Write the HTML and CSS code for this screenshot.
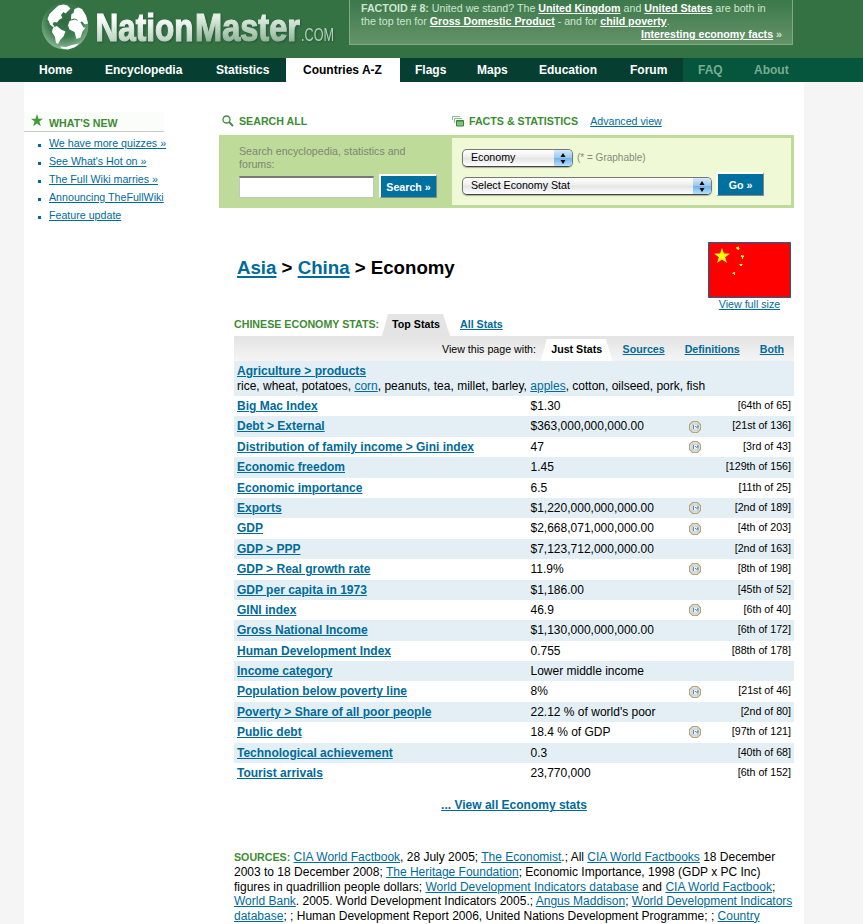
FILE: index.html
```
<!DOCTYPE html>
<html lang="en">
<head>
<meta charset="utf-8">
<title>NationMaster - Chinese Economy statistics</title>
<link rel="stylesheet" href="styles.css">
</head>
<body>
<svg class="defs" width="0" height="0" aria-hidden="true">
  <symbol id="graph" viewBox="0 0 12 12">
    <path d="M3.600.6h4.800l3 3v4.800l-3 3H3.600l-3-3V3.600z" fill="#f4efe0" stroke="#b3a57f" stroke-width="1.200"/>
    <path d="M3 3h6v6H3z" fill="#e8f2fa" stroke="#a5bdd3" stroke-width=".8"/>
    <path d="M4.500 4v4M6 5l1.500 1.500L9 4.500V7.500" fill="none" stroke="#58799b" stroke-width=".9"/>
  </symbol>
</svg>
<header class="header">
  <div class="logo">
    <svg class="globe" viewBox="0 0 50 50" width="50" height="50">
      <defs><radialGradient id="sea" cx=".5" cy=".35" r=".65"><stop offset="0" stop-color="#2c6b40"/><stop offset=".6" stop-color="#3f7d50"/><stop offset="1" stop-color="#8db997"/></radialGradient></defs>
      <circle cx="25" cy="25.200" r="23.300" fill="url(#sea)"/>
      <g fill="#fff">
        <path d="M7.500 18l2-5 4-4 5-4.500 5-1 4 1 3 3-2 2-3 3-2-1.500-2.500 3 1.500 3-3 1.500-2.500 3-3-.5-1.500 2 2 2.500-1.500.5-3-2.500-1-3z"/>
        <path d="M13 26.500l4-1.500 4 3.500 4.500 2-2 5-3 3-2.500 4.500-2-1-1-6-3-5z"/>
        <path d="M29.500 20l5-1.500 5.500 2 3.500 6h2l-3 4-2 6-4 1.500-2-7-5-2.500-1.500-4z"/>
        <path d="M31 16l.5-3 2-1 1-4 4-1.500 3.500 1.500 4 6.500 2 8-3 1-3-3-3 1-2-3-3-1-3 1z"/>
        <path d="M20 45.500l6 .5 6-2 7-1.500-4 3.500-7 2.500-6-1z"/>
      </g>
    </svg>
    <svg class="wordmark" width="246" height="50" viewBox="0 0 246 50">
      <defs><linearGradient id="wa" x1="0" x2="0" y1="0" y2="1"><stop offset=".25" stop-color="#fff"/><stop offset=".85" stop-color="#b9d2be"/></linearGradient><linearGradient id="wb" x1="0" x2="0" y1="0" y2="1"><stop offset=".25" stop-color="#e3efe5"/><stop offset=".85" stop-color="#8fb397"/></linearGradient></defs>
      <text class="word" x="1.500" y="40.500" textLength="98" lengthAdjust="spacingAndGlyphs" fill="url(#wa)" stroke="url(#wa)">Nation</text>
      <text class="word" x="101" y="40.500" textLength="105" lengthAdjust="spacingAndGlyphs" fill="url(#wb)" stroke="url(#wb)">Master</text>
      <text class="com" x="207" y="40.500" textLength="33" lengthAdjust="spacingAndGlyphs">.COM</text>
    </svg>
  </div>
  <div class="factoid"><b>FACTOID # 8:</b> United we stand? The <a>United Kingdom</a> and <a>United States</a> are both in<br>the top ten for <a>Gross Domestic Product</a> - and for <a>child poverty</a>.<div class="more"><a>Interesting economy facts</a> <b>»</b></div></div>
</header>
<nav class="nav"><a>Home</a><a>Encyclopedia</a><a>Statistics</a><a class="active">Countries A-Z</a><a>Flags</a><a>Maps</a><a>Education</a><a>Forum</a><a class="dim">FAQ</a><a class="dim">About</a></nav>
<div class="page">
  <aside class="side">
    <h3><svg width="14" height="13" viewBox="0 0 14 13"><path d="M7 0l1.500 4.700H13L9.400 7.500l1.400 4.800L7 9.400l-3.800 2.900 1.400-4.800L1 4.700h4.500z" fill="#3f9c3a"/></svg>WHAT'S NEW</h3>
    <ul>
      <li><a>We have more quizzes »</a></li><li><a>See What's Hot on »</a></li><li><a>The Full Wiki marries »</a></li><li><a>Announcing TheFullWiki</a></li><li><a>Feature update</a></li>
    </ul>
  </aside>
  <main class="main">
    <div class="search-heads">
      <h3 class="h-search"><svg width="12" height="12" viewBox="0 0 12 12"><circle cx="4.500" cy="4.500" r="3.500" fill="#f4fbf2" stroke="#3d8c43" stroke-width="1.300"/><path d="M7 7l4 4" stroke="#3d8c43" stroke-width="1.800"/></svg>SEARCH ALL</h3>
      <h3 class="h-facts"><svg width="12" height="11" viewBox="0 0 12 11"><path d="M.5 4V.5H8M2.500 7V2.500H10" fill="none" stroke="#8dba8c"/><path d="M4.500 4.500h7v5.500h-7z" fill="#7fc47b" stroke="#35853a"/><path d="M5 5h6" stroke="#35853a"/></svg>FACTS &amp; STATISTICS</h3>
      <a class="adv">Advanced view</a>
    </div>
    <div class="search-box">
      <div class="all">
        <p>Search encyclopedia, statistics and<br>forums:</p>
        <div class="line"><input type="text" aria-label="Search"><button class="btn search">Search »</button></div>
      </div>
      <div class="facts">
        <div class="line"><div class="select short"><span>Economy</span><i><svg width="6" height="11" viewBox="0 0 6 11"><path d="M3 0l2.500 4h-5zM3 11L.5 7h5z"/></svg></i></div><span class="graphable">(* = Graphable)</span></div>
        <div class="line second"><div class="select long"><span>Select Economy Stat</span><i><svg width="6" height="11" viewBox="0 0 6 11"><path d="M3 0l2.500 4h-5zM3 11L.5 7h5z"/></svg></i></div><button class="btn go">Go »</button></div>
      </div>
    </div>
    <div class="title">
      <h1><a>Asia</a> &gt; <a>China</a> &gt; Economy</h1>
      <div class="flag">
        <svg width="83" height="56" viewBox="0 0 83 56"><path d="M.5.5h82v55H.5z" fill="#f00" stroke="#006b9b"/><g fill="#ff0"><path d="M14 6l1.900 5.600H22l-4.900 3.600 1.900 5.800-5-3.500L9 21l1.900-5.800L6 11.600h6.100z"/><path d="M28.500 5h1.500l1-1v2l1 1h-1v1h-1l-2-2zM33 13h1l1 1 1-1v2h-1v2h-1v-2h-1zM31 22h4l-1 1v1h-2v-1zM24.500 31l1.500-1h1v3h-1v-1h-1.500z"/></g></svg>
        <a>View full size</a>
      </div>
    </div>
    <div class="tabs"><b class="label">CHINESE ECONOMY STATS:</b><span class="tab">Top Stats</span><a>All Stats</a></div>
    <div class="views"><span class="with">View this page with:</span><span class="tab">Just Stats</span><a>Sources</a><a>Definitions</a><a>Both</a></div>
    <div class="stats">
      <div class="row first"><a class="name">Agriculture &gt; products</a><span>rice, wheat, potatoes, <a>corn</a>, peanuts, tea, millet, barley, <a>apples</a>, cotton, oilseed, pork, fish</span></div>
      <div class="row"><a class="name">Big Mac Index</a><span>$1.30</span><em></em><small>[64th of 65]</small></div>
      <div class="row"><a class="name">Debt &gt; External</a><span>$363,000,000,000.00</span><em><svg><use href="#graph"/></svg></em><small>[21st of 136]</small></div>
      <div class="row"><a class="name">Distribution of family income &gt; Gini index</a><span>47</span><em><svg><use href="#graph"/></svg></em><small>[3rd of 43]</small></div>
      <div class="row"><a class="name">Economic freedom</a><span>1.45</span><em></em><small>[129th of 156]</small></div>
      <div class="row"><a class="name">Economic importance</a><span>6.5</span><em></em><small>[11th of 25]</small></div>
      <div class="row"><a class="name">Exports</a><span>$1,220,000,000,000.00</span><em><svg><use href="#graph"/></svg></em><small>[2nd of 189]</small></div>
      <div class="row"><a class="name">GDP</a><span>$2,668,071,000,000.00</span><em><svg><use href="#graph"/></svg></em><small>[4th of 203]</small></div>
      <div class="row"><a class="name">GDP &gt; PPP</a><span>$7,123,712,000,000.00</span><em></em><small>[2nd of 163]</small></div>
      <div class="row"><a class="name">GDP &gt; Real growth rate</a><span>11.9%</span><em><svg><use href="#graph"/></svg></em><small>[8th of 198]</small></div>
      <div class="row"><a class="name">GDP per capita in 1973</a><span>$1,186.00</span><em></em><small>[45th of 52]</small></div>
      <div class="row"><a class="name">GINI index</a><span>46.9</span><em><svg><use href="#graph"/></svg></em><small>[6th of 40]</small></div>
      <div class="row"><a class="name">Gross National Income</a><span>$1,130,000,000,000.00</span><em></em><small>[6th of 172]</small></div>
      <div class="row"><a class="name">Human Development Index</a><span>0.755</span><em></em><small>[88th of 178]</small></div>
      <div class="row"><a class="name">Income category</a><span>Lower middle income</span><em></em><small></small></div>
      <div class="row"><a class="name">Population below poverty line</a><span>8%</span><em><svg><use href="#graph"/></svg></em><small>[21st of 46]</small></div>
      <div class="row"><a class="name">Poverty &gt; Share of all poor people</a><span>22.12 % of world's poor</span><em></em><small>[2nd of 80]</small></div>
      <div class="row"><a class="name">Public debt</a><span>18.4 % of GDP</span><em><svg><use href="#graph"/></svg></em><small>[97th of 121]</small></div>
      <div class="row"><a class="name">Technological achievement</a><span>0.3</span><em></em><small>[40th of 68]</small></div>
      <div class="row"><a class="name">Tourist arrivals</a><span>23,770,000</span><em></em><small>[6th of 152]</small></div>
    </div>
    <div class="all-link"><a>... View all Economy stats</a></div>
    <p class="sources"><b>SOURCES:</b> <a>CIA World Factbook</a>, 28 July 2005; <a>The Economist</a>.; All <a>CIA World Factbooks</a> 18 December<br>2003 to 18 December 2008; <a>The Heritage Foundation</a>; Economic Importance, 1998 (GDP x PC Inc)<br>figures in quadrillion people dollars; <a>World Development Indicators database</a> and <a>CIA World Factbook</a>;<br><a>World Bank</a>. 2005. World Development Indicators 2005.; <a>Angus Maddison</a>; <a>World Development Indicators</a><br><a>database</a>; ; Human Development Report 2006, United Nations Development Programme; ; <a>Country</a></p>
  </main>
</div>
</body>
</html>
```
FILE: styles.css
```
* { box-sizing: border-box; }
html, body { margin: 0; height: 924px; overflow: hidden; }
body { background: #f5f5f5; font: 12px/14px "Liberation Sans", Arial, sans-serif; color: #000; white-space: nowrap; }
.defs { position: absolute; }
h1, h3, p, ul { margin: 0; padding: 0; }
svg { display: block; flex: none; }
a { color: #006b9b; text-decoration: underline; text-underline-offset: 1px; text-decoration-thickness: 1px; }
h3 { font-size: 10.660px; line-height: 18px; color: #3d8c33; display: flex; align-items: center; }

.header { height: 58px; background: #347243; display: flex; justify-content: space-between; padding: 0 70px 0 40px; }
.logo { display: flex; }
.globe { margin-top: 1px; }
.wordmark { margin: 0 -10px 0 4px; font-family: "Liberation Sans", Arial, sans-serif; filter: drop-shadow(1px 1px 1px #245635); }
.word { font-size: 38px; font-weight: bold; stroke-width: 1.200px; }
.com { font-size: 19px; fill: #b4d0b9; }
.factoid { width: 444px; height: 45px; padding: 2px 10px 0 11px; border: 1px solid #7fab83; border-top: 0; background: linear-gradient(#3b784a, #659468); font-size: 10.660px; line-height: 13px; color: #cde5d0; }
.factoid a { color: #fff; font-weight: bold; }
.more { text-align: right; }

.nav { height: 24px; display: grid; grid-template-columns: 66px 111px 70px 114px 77px 62px 91px 68px 56px 100px; padding-left: 39px; background: linear-gradient(90deg, #063f32 683px, #06563d 683px); }
.nav a { color: #fff; font-weight: bold; line-height: 24px; text-decoration: none; }
.nav a.active { background: #fff; color: #000; padding-left: 17px; }
.nav a.active + a { padding-left: 15px; }
.nav a.dim { color: #79ac91; }

.page { width: 780px; height: 842px; margin-left: 24px; background: #fff; display: flex; }
.side { width: 195px; padding-top: 30px; }
.side h3 { width: 140px; height: 20px; padding: 2px 0 0 6px; border-bottom: 1px solid #c9c9c9; background: #fbfdfa; }
.side h3 svg { margin: -5px 5px 0 0; }
.side ul { list-style: none; padding-top: 2px; font-size: 10.660px; line-height: 18px; }
.side li { display: flex; padding-left: 14px; }
.side li::before { content: ""; width: 3px; height: 3px; background: #006b9b; margin: 10px 8px 0 0; }
.main { width: 575px; }

.search-heads { height: 53px; padding: 30px 0 0 3px; display: flex; align-items: flex-start; font-size: 10.660px; line-height: 18px; }
.h-search svg { margin-right: 5px; }
.h-search { width: 230px; }
.h-facts svg { margin-right: 5px; }
.adv { margin-left: 12px; }
.search-box { height: 73px; background: #bfdb99; display: flex; padding: 3px 3px 3px 20px; }
.all { width: 213px; padding-top: 7px; color: #7c8773; font-size: 10.660px; line-height: 13px; }
.line { display: flex; }
.all .line { padding-top: 3px; }
input { width: 135px; height: 22px; margin: 2px 5px 0 0; border: 1px solid #c4c4c4; border-top: 2px solid #777; background: #fff; }
.btn { padding: 0; height: 24px; border: solid; border-width: 2px 1px 1px 2px; border-color: #fff #888 #888 #fff; background: #00709f; color: #fff; font: bold 10.660px/18px "Liberation Sans", Arial, sans-serif; }
.search { width: 58px; }
.go { width: 48px; margin: -5px 0 0 4px; }
.facts { width: 339px; background: #eff9d6; padding: 11px 0 0 10px; font-size: 10.660px; }
.second { padding-top: 10px; }
.select { height: 18px; border: 1px solid #777; border-bottom-color: #444; border-radius: 5px; background: linear-gradient(#fff, #eee 45%, #e4e4e4 50%, #fff); display: flex; justify-content: space-between; line-height: 15px; padding-left: 8px; box-shadow: 0 1px 1px #aab09b; overflow: hidden; }
.select i { width: 18px; background: linear-gradient(#d5eafa, #9cc8f0 48%, #72b2ea 52%, #b4e2ff); display: flex; align-items: center; justify-content: center; }
.short { width: 111px; }
.long { width: 250px; }
.graphable { color: #858c7b; line-height: 17px; padding-left: 4px; font-size: 10px; }

.title { height: 106px; display: flex; justify-content: space-between; padding: 34px 3px 0 18px; }
h1 { font-size: 18.660px; line-height: 22px; padding-top: 15px; }
h1 a { text-decoration-thickness: 2px; text-underline-offset: 2px; }
.flag { width: 83px; text-align: center; font-size: 10.660px; line-height: 13px; }
.tabs { height: 22px; display: flex; padding-left: 15px; font-size: 10.660px; line-height: 21px; font-weight: bold; }
.label { width: 148px; color: #3d8c33; }
.tabs .tab { width: 68px; text-align: center; background: #e4e4e4; clip-path: polygon(6px 0, 61px 0, 100% 100%, 0 100%); }
.tabs a { margin-left: 10px; }
.views { height: 25px; margin-left: 15px; background: linear-gradient(#e3e3e3, #f5f5f5); display: flex; padding: 3px 10px 0 208px; font-size: 10.660px; line-height: 21px; font-weight: bold; }
.with { width: 99px; font-weight: normal; }
.views .tab { width: 72px; text-align: center; background: #fff; clip-path: polygon(6px 0, 65px 0, 100% 100%, 0 100%); }
.views a { margin-left: 10px; }
.views a + a { margin-left: 20px; }
.stats { margin-left: 15px; }
.row { height: 20.400px; display: grid; grid-template-columns: 293.500px 155px 20px 1fr; padding: 0 3px; line-height: 20.400px; }
.row:nth-child(odd) { background: #e3eff5; }
.name { font-weight: bold; justify-self: start; }
.row small { font-size: 10.660px; line-height: 19.400px; text-align: right; }
.row em { display: flex; align-items: center; padding-left: 3px; }
.row em svg { width: 12px; height: 12px; }
.row.first { height: 35px; display: block; padding-top: 3px; line-height: 15px; }
.first > * { display: block; width: max-content; }
.all-link { padding: 15px 0 0 15px; text-align: center; font-weight: bold; }
.sources { padding: 38px 0 0 15px; line-height: 14.600px; }
.sources b { color: #3d8c33; font-size: 10.660px; }
```
